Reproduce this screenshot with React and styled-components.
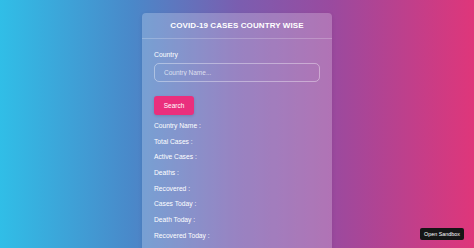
import styled, { createGlobalStyle } from "styled-components";

const GlobalStyle = createGlobalStyle`
  html, body { margin: 0; padding: 0; height: 100%; }
  body {
    font-family: "Liberation Sans", Arial, sans-serif;
    overflow: hidden;
  }
`;

const Page = styled.main`
  width: 474px;
  height: 248px;
  box-sizing: border-box;
  background: linear-gradient(to right, #30bee7 0%, #4a88c9 28%, #7a5eb0 50%, #9a4a9f 70%, #df367a 100%);
  display: flex;
  justify-content: center;
  padding-top: 13px;
  overflow: hidden;
  position: relative;
`;

const Card = styled.section`
  width: 190px;
  height: 260px;
  background: rgba(255, 255, 255, 0.23);
  border-radius: 4px;
  box-shadow: 0 1px 4px rgba(0, 0, 0, 0.08);
  color: #fff;
`;

const Header = styled.h1`
  margin: 0;
  height: 25px;
  display: flex;
  align-items: center;
  justify-content: center;
  font-size: 8px;
  font-weight: 700;
  letter-spacing: 0.1px;
  border-bottom: 1px solid rgba(255, 255, 255, 0.22);
`;

const Body = styled.div`
  padding: 12px 12px 0 12px;
`;

const Label = styled.label`
  display: block;
  font-size: 6.8px;
  margin-bottom: 3px;
`;

const Input = styled.input`
  width: 100%;
  height: 19px;
  box-sizing: border-box;
  border: 1px solid rgba(255, 255, 255, 0.38);
  border-radius: 5px;
  background: transparent;
  padding: 0 9px;
  font-family: inherit;
  font-size: 6.5px;
  color: #fff;
  outline: none;
  &::placeholder { color: rgba(255, 255, 255, 0.72); }
`;

const Button = styled.button`
  display: block;
  margin-top: 14px;
  width: 40px;
  height: 19px;
  border: none;
  border-radius: 3px;
  background: #ea2f7d;
  color: #fff;
  font-family: inherit;
  font-size: 6.5px;
  box-shadow: 0 1px 3px rgba(0, 0, 0, 0.15);
`;

const Stats = styled.ul`
  list-style: none;
  margin: 3px 0 0 0;
  padding: 0;
  display: flex;
  flex-direction: column;
`;

const Stat = styled.li`
  font-size: 6.7px;
  height: 15.7px;
  line-height: 15.7px;
`;

const Sandbox = styled.a`
  position: absolute;
  right: 10px;
  bottom: 8px;
  background: #151515;
  color: #fff;
  font-size: 5.4px;
  line-height: 12px;
  padding: 0 4px;
  border-radius: 2px;
  text-decoration: none;
`;

const labels = [
  "Country Name :",
  "Total Cases :",
  "Active Cases :",
  "Deaths :",
  "Recovered :",
  "Cases Today :",
  "Death Today :",
  "Recovered Today :",
];

export default function App() {
  return (
    <>
      <GlobalStyle />
      <Page>
        <Card>
          <Header>COVID-19 CASES COUNTRY WISE</Header>
          <Body>
            <Label>Country</Label>
            <Input placeholder="Country Name..." />
            <Button>Search</Button>
            <Stats>
              {labels.map((l) => (
                <Stat key={l}>{l}</Stat>
              ))}
            </Stats>
          </Body>
        </Card>
        <Sandbox>Open Sandbox</Sandbox>
      </Page>
    </>
  );
}
